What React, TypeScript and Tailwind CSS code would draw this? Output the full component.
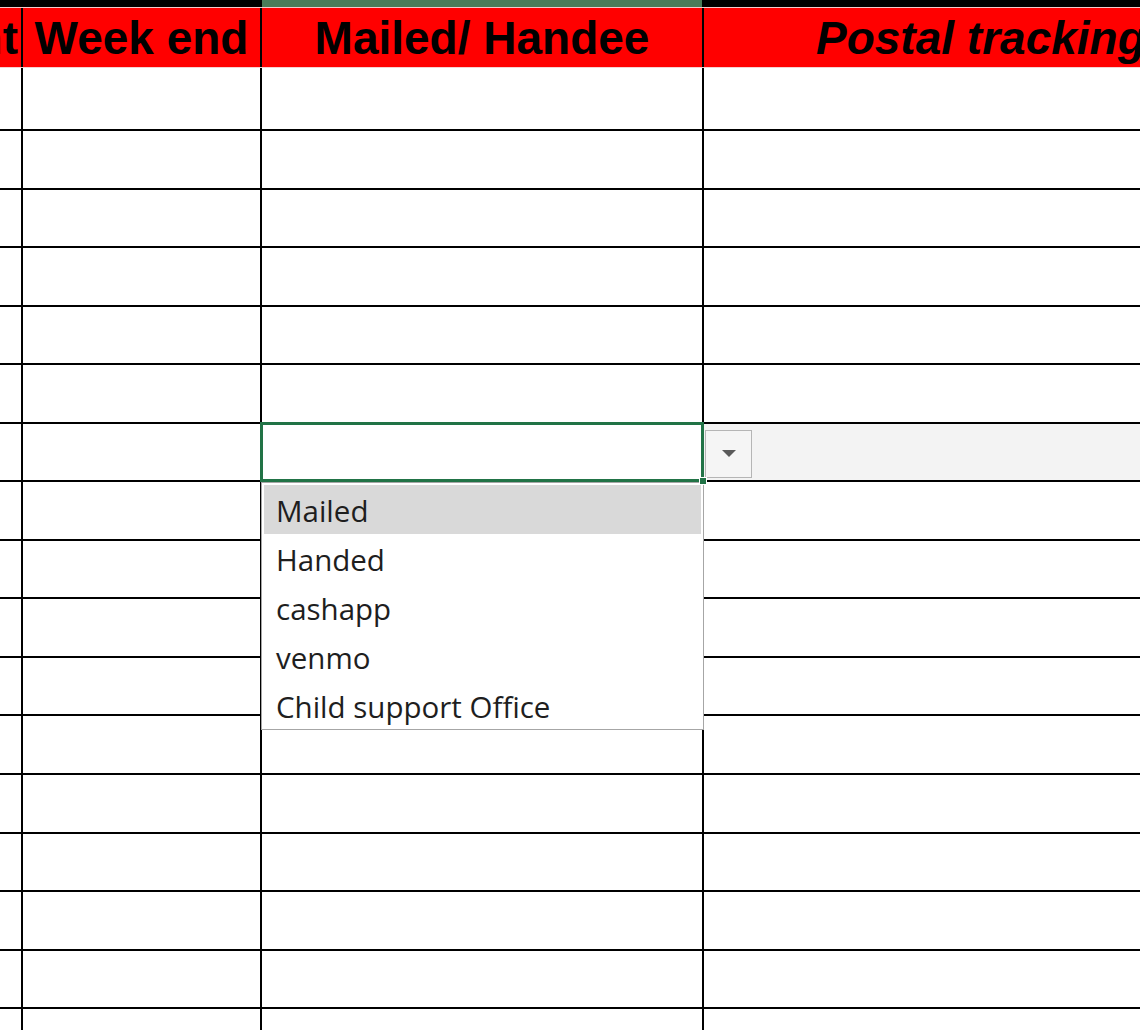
import React from 'react'

const options = ['Mailed', 'Handed', 'cashapp', 'venmo', 'Child support Office']

// body rows below the header band; the first is a bit taller
const rowCount = 17
const activeRow = 6

const HeaderCell: React.FC<{ className?: string; children?: React.ReactNode }> = ({ className = '', children }) => (
  <div className={`h-full border-r-2 border-black flex items-center overflow-hidden whitespace-nowrap ${className}`}>
    {children}
  </div>
)

const DropdownList = () => (
  <div className="absolute left-[-1px] top-[calc(100%+2px)] z-20 w-[443px] h-[248px] bg-white border border-[#a6a6a6] pt-[2px] px-[2px]">
    {options.map((opt, i) => (
      <div
        key={opt}
        className={`h-[49px] flex items-center pl-[12px] pt-[3px] text-[29.5px] text-[#1e1e1e] ${i === 0 ? 'bg-[#d9d9d9]' : ''}`}
        style={{ fontFamily: '"Open Sans", "Noto Sans", sans-serif' }}
      >
        {opt}
      </div>
    ))}
  </div>
)

export default function App() {
  return (
    <div className="w-[1140px] h-[1030px] overflow-hidden bg-white relative" style={{ fontFamily: '"Liberation Sans", Arial, sans-serif' }}>
      {/* frozen top edge */}
      <div className="flex h-[7px] bg-black">
        <div className="w-[262px]" />
        <div className="w-[440px] bg-[#4a7c59]" />
      </div>
      <div className="h-[1px] bg-[#f6c9c9]" />

      {/* header band */}
      <div className="flex h-[60px] bg-[#ff0000] text-black font-bold text-[46px] leading-none border-b border-[#f6d0d0]">
        <HeaderCell className="w-[23px] justify-end">
          <span className="pr-[3px]">Amount</span>
        </HeaderCell>
        <HeaderCell className="w-[239px] justify-center">Week end</HeaderCell>
        <HeaderCell className="w-[442px] justify-center">Mailed/ Handee</HeaderCell>
        <div className="flex-1 h-full flex items-center overflow-hidden whitespace-nowrap pl-[112px] italic">
          Postal tracking number
        </div>
      </div>

      {/* grid body */}
      {Array.from({ length: rowCount }).map((_, r) => {
        const active = r === activeRow
        return (
          <div key={r} className={`flex border-b-2 border-black ${r === 0 ? 'h-[63px]' : 'h-[58.55px]'}`}>
            <div className="w-[23px] h-full border-r-2 border-black" />
            <div className="w-[239px] h-full border-r-2 border-black" />
            <div className="w-[442px] h-full border-r-2 border-black relative">
              {active && (
                <>
                  <div className="absolute -left-[2px] -top-[2px] -right-[2px] -bottom-[2px] border-[3px] border-[#217346] z-10" />
                  <div className="absolute -right-[5px] -bottom-[5px] w-[8px] h-[8px] bg-[#217346] border border-white z-30" />
                  <DropdownList />
                </>
              )}
            </div>
            <div className={`flex-1 h-full relative ${active ? 'bg-[#f3f3f3]' : ''}`}>
              {active && (
                <button className="absolute left-[1px] top-[6px] w-[47px] h-[48px] bg-[#f5f5f5] border border-[#b5b5b5] flex items-center justify-center">
                  <svg width="14" height="7" viewBox="0 0 14 7">
                    <path d="M0 0 H14 L7 7 Z" fill="#5a5a5a" />
                  </svg>
                </button>
              )}
            </div>
          </div>
        )
      })}
    </div>
  )
}
